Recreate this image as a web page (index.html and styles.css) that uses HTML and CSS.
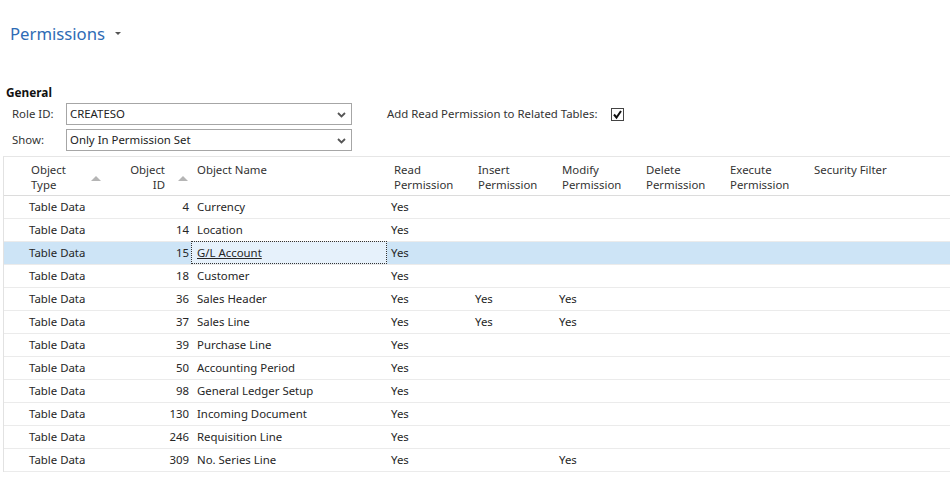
FILE: index.html
```html
<!DOCTYPE html>
<html>
<head>
<meta charset="utf-8">
<link rel="stylesheet" href="styles.css">
</head>
<body>
<div class="page">
  <div class="title">Permissions <span class="caret"></span></div>

  <div class="general">
    <div class="section-name">General</div>
    <div class="fields">
      <div class="field-col">
        <div class="field">
          <span class="label">Role ID:</span>
          <div class="select"><span>CREATESO</span>
            <svg class="chev" width="9" height="6" viewBox="0 0 9 6"><path d="M1 1 L4.5 4.5 L8 1" fill="none" stroke="#555" stroke-width="1.8"/></svg>
          </div>
        </div>
        <div class="field">
          <span class="label">Show:</span>
          <div class="select"><span>Only In Permission Set</span>
            <svg class="chev" width="9" height="6" viewBox="0 0 9 6"><path d="M1 1 L4.5 4.5 L8 1" fill="none" stroke="#555" stroke-width="1.8"/></svg>
          </div>
        </div>
      </div>
      <div class="field check-field">
        <span class="label">Add Read Permission to Related Tables:</span>
        <span class="checkbox">
          <svg width="11" height="11" viewBox="0 0 11 11"><path d="M2 5.5 L4.5 8.5 L9 2" fill="none" stroke="#111" stroke-width="2"/></svg>
        </span>
      </div>
    </div>
  </div>

  <div class="grid-wrap">
    <table class="grid">
      <colgroup>
        <col class="c-type"><col class="c-id"><col class="c-name">
        <col class="c-perm"><col class="c-perm"><col class="c-perm"><col class="c-perm"><col class="c-perm"><col>
      </colgroup>
      <thead>
        <tr>
          <th class="h-type"><div class="hwrap"><span>Object<br>Type</span><span class="sort"></span></div></th>
          <th class="h-id"><div class="hwrap right"><span>Object<br>ID</span><span class="sort"></span></div></th>
          <th class="h-name">Object Name</th>
          <th>Read<br>Permission</th>
          <th>Insert<br>Permission</th>
          <th>Modify<br>Permission</th>
          <th>Delete<br>Permission</th>
          <th>Execute<br>Permission</th>
          <th>Security Filter</th>
        </tr>
      </thead>
      <tbody>
        <tr><td class="type">Table Data</td><td class="id">4</td><td class="name">Currency</td><td>Yes</td><td></td><td></td><td></td><td></td><td></td></tr>
        <tr><td class="type">Table Data</td><td class="id">14</td><td class="name">Location</td><td>Yes</td><td></td><td></td><td></td><td></td><td></td></tr>
        <tr class="selected"><td class="type">Table Data</td><td class="id">15</td><td class="name focus"><span class="link">G/L Account</span></td><td>Yes</td><td></td><td></td><td></td><td></td><td></td></tr>
        <tr><td class="type">Table Data</td><td class="id">18</td><td class="name">Customer</td><td>Yes</td><td></td><td></td><td></td><td></td><td></td></tr>
        <tr><td class="type">Table Data</td><td class="id">36</td><td class="name">Sales Header</td><td>Yes</td><td>Yes</td><td>Yes</td><td></td><td></td><td></td></tr>
        <tr><td class="type">Table Data</td><td class="id">37</td><td class="name">Sales Line</td><td>Yes</td><td>Yes</td><td>Yes</td><td></td><td></td><td></td></tr>
        <tr><td class="type">Table Data</td><td class="id">39</td><td class="name">Purchase Line</td><td>Yes</td><td></td><td></td><td></td><td></td><td></td></tr>
        <tr><td class="type">Table Data</td><td class="id">50</td><td class="name">Accounting Period</td><td>Yes</td><td></td><td></td><td></td><td></td><td></td></tr>
        <tr><td class="type">Table Data</td><td class="id">98</td><td class="name">General Ledger Setup</td><td>Yes</td><td></td><td></td><td></td><td></td><td></td></tr>
        <tr><td class="type">Table Data</td><td class="id">130</td><td class="name">Incoming Document</td><td>Yes</td><td></td><td></td><td></td><td></td><td></td></tr>
        <tr><td class="type">Table Data</td><td class="id">246</td><td class="name">Requisition Line</td><td>Yes</td><td></td><td></td><td></td><td></td><td></td></tr>
        <tr><td class="type">Table Data</td><td class="id">309</td><td class="name">No. Series Line</td><td>Yes</td><td></td><td>Yes</td><td></td><td></td><td></td></tr>
      </tbody>
    </table>
  </div>
</div>
</body>
</html>
```
FILE: styles.css
```css
html, body {
  margin: 0;
  padding: 0;
  background: #fff;
}
*, *::before, *::after {
  box-sizing: border-box;
}
body {
  font-family: "Noto Sans", "Open Sans", "Liberation Sans", sans-serif;
  font-size: 11.4px;
  color: #262626;
  width: 950px;
  height: 478px;
  overflow: hidden;
}
.page {
  padding-top: 22px;
}
.title {
  padding-left: 10px;
  font-size: 16.7px;
  color: #2e6bb5;
  height: 24px;
  line-height: 24px;
  display: flex;
  align-items: center;
}
.caret {
  display: inline-block;
  margin-left: 10px;
  margin-top: -2px;
  width: 0;
  height: 0;
  border-left: 3px solid transparent;
  border-right: 3px solid transparent;
  border-top: 3px solid #555;
}
.general {
  margin-top: 38px;
}
.section-name {
  padding-left: 6px;
  font-weight: bold;
  color: #111;
  font-size: 11.8px;
  height: 17px;
  line-height: 16px;
}
.fields {
  display: flex;
  align-items: flex-start;
  margin-top: 2px;
}
.field-col {
  display: flex;
  flex-direction: column;
  gap: 4px;
}
.field {
  display: flex;
  align-items: center;
  height: 22px;
  line-height: 20px;
}
.label {
  color: #333;
  padding-bottom: 1px;
}
.field-col .label {
  width: 66px;
  padding-left: 12px;
}
.select {
  width: 286px;
  height: 22px;
  border: 1px solid #a6a6a6;
  display: flex;
  align-items: center;
  justify-content: space-between;
  padding: 0 5px 1px 3px;
  color: #222;
}
.chev {
  margin-top: 2px;
}
.check-field {
  margin-left: 35px;
}
.checkbox {
  margin-left: 14px;
  width: 13px;
  height: 13px;
  border: 1px solid #444;
  display: inline-flex;
  align-items: center;
  justify-content: center;
}
.grid-wrap {
  margin-top: 5px;
  margin-left: 3px;
  border-left: 1px solid #e2e2e2;
  border-top: 1px solid #e6e6e6;
}
.grid {
  border-collapse: collapse;
  table-layout: fixed;
  width: 947px;
}
.c-type { width: 107px; }
.c-id { width: 80px; }
.c-name { width: 196px; }
.c-perm { width: 84px; }
.grid th {
  font-weight: normal;
  text-align: left;
  vertical-align: top;
  color: #333;
  line-height: 15px;
  padding: 5px 4px 0 7px;
  height: 38px;
  border-bottom: 1px solid #dcdcdc;
}
.grid th.h-type {
  padding-left: 27px;
}
.grid th.h-id {
  padding-left: 0;
  padding-right: 0;
}
.grid th.h-name {
  padding-left: 6px;
}
.hwrap {
  display: flex;
  align-items: center;
}
.hwrap.right {
  justify-content: flex-end;
  text-align: right;
}
.h-type .hwrap {
  justify-content: space-between;
  padding-right: 6px;
}
.sort {
  display: inline-block;
  width: 0;
  height: 0;
  border-left: 5px solid transparent;
  border-right: 5px solid transparent;
  border-bottom: 5px solid #b5b5b5;
  margin-top: 2px;
}
.h-id .sort {
  margin-left: 13px;
  margin-right: 3px;
}
.grid td {
  height: 23px;
  padding: 0 4px;
  border-bottom: 1px solid #ebebeb;
  white-space: nowrap;
  color: #262626;
}
.grid td.type {
  padding-left: 25px;
}
.grid td.id {
  text-align: right;
  padding-right: 2px;
}
.grid td.name {
  padding-left: 6px;
}
.grid tr.selected td {
  background: #cde4f6;
}
.grid tr.selected td.focus {
  background: #e6f1fb;
  outline: 1px dotted #333;
  outline-offset: -1px;
}
.link {
  text-decoration: underline;
}
```
